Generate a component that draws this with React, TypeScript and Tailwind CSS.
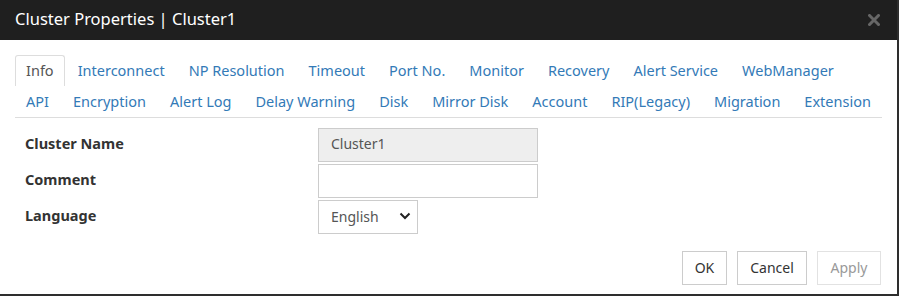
const row1 = ['Info', 'Interconnect', 'NP Resolution', 'Timeout', 'Port No.', 'Monitor', 'Recovery', 'Alert Service', 'WebManager']
const row2 = ['API', 'Encryption', 'Alert Log', 'Delay Warning', 'Disk', 'Mirror Disk', 'Account', 'RIP(Legacy)', 'Migration', 'Extension']

function Tab({ label, active }: { label: string; active?: boolean }) {
  return (
    <li className="mr-[2px] shrink-0 whitespace-nowrap text-[14.5px]">
      <span
        className={
          active
            ? 'block h-[31px] px-[10px] leading-[29px] border border-b-0 border-[#ddd] rounded-t-[3px] bg-white text-[#555]'
            : 'block h-[31px] px-[10px] leading-[29px] border border-transparent text-[#337ab7]'
        }
      >
        {label}
      </span>
    </li>
  )
}

function Field({ label, children }: { label: string; children: React.ReactNode }) {
  return (
    <div className="flex items-center h-[34px]">
      <div className="w-[303px] pl-[10px] pb-[3px] font-bold text-[#333] text-[14.5px]">{label}</div>
      {children}
    </div>
  )
}

export default function App() {
  return (
    <div
      className="w-[899px] h-[296px] bg-white border-r-2 border-b-2 border-[#2e2e2e] flex flex-col text-[14px]"
      style={{ fontFamily: '"Noto Sans", "Open Sans", sans-serif' }}
    >
      <div className="h-[40px] shrink-0 bg-[#1f1f1f] flex items-center justify-between pl-[15px] pr-[17px]">
        <span className="text-white text-[16.5px] pb-[2px]">Cluster Properties | Cluster1</span>
        <svg width="12" height="12" viewBox="0 0 12 12">
          <path d="M1.5 1.5 L10.5 10.5 M10.5 1.5 L1.5 10.5" stroke="#666" strokeWidth="3" strokeLinecap="square" />
        </svg>
      </div>

      <div className="px-[15px] pt-[15px] flex-1 flex flex-col">
        <ul className="flex flex-col border-b border-[#ddd]">
          <div className="flex">
            {row1.map((t, i) => <Tab key={t} label={t} active={i === 0} />)}
          </div>
          <div className="flex">
            {row2.map(t => <Tab key={t} label={t} />)}
          </div>
        </ul>

        <div className="mt-[10px] flex flex-col gap-[2px]">
          <Field label="Cluster Name">
            <div className="w-[220px] h-[34px] border border-[#ccc] bg-[#eee] px-[12px] pb-[3px] flex items-center text-[#555]">Cluster1</div>
          </Field>
          <Field label="Comment">
            <div className="w-[220px] h-[34px] border border-[#ccc] bg-white" />
          </Field>
          <Field label="Language">
            <div className="w-[100px] h-[34px] border border-[#ccc] bg-white pl-[12px] pr-[6px] pb-[2px] flex items-center justify-between text-[#555]">
              <span>English</span>
              <svg width="12" height="8" viewBox="0 0 12 8">
                <path d="M1.5 1.5 L6 6 L10.5 1.5" fill="none" stroke="#222" strokeWidth="2" />
              </svg>
            </div>
          </Field>
        </div>

        <div className="mt-[17px] flex justify-end gap-[10px] pr-[1px]">
          <button className="w-[45px] h-[34px] pb-[2px] border border-[#ccc] text-[#333]">OK</button>
          <button className="w-[70px] h-[34px] pb-[2px] border border-[#ccc] text-[#333]">Cancel</button>
          <button className="w-[64px] h-[34px] pb-[2px] border border-[#e2e2e2] text-[#999]">Apply</button>
        </div>
      </div>
    </div>
  )
}
